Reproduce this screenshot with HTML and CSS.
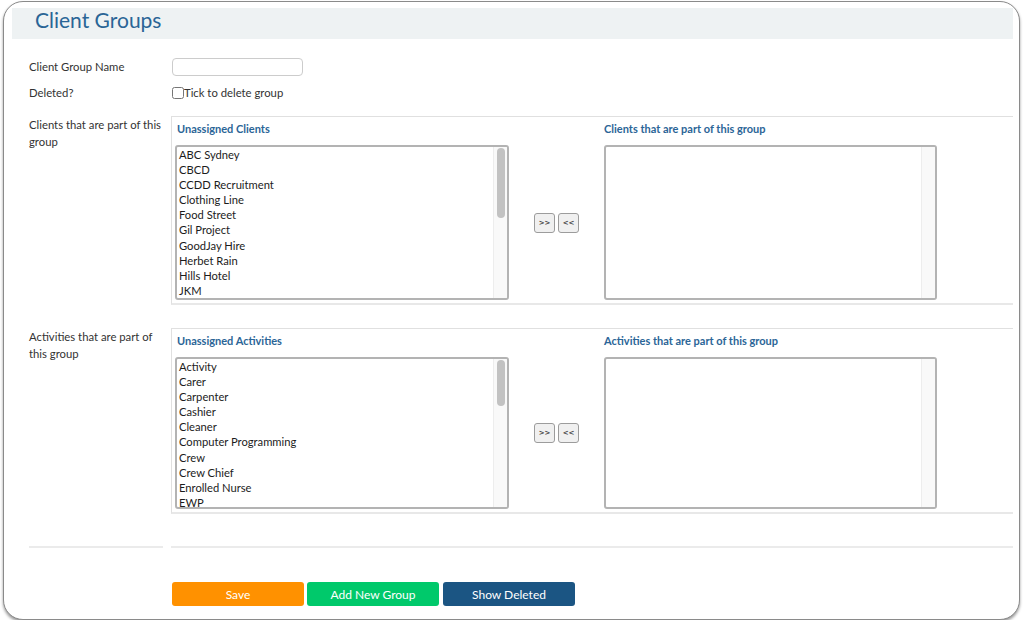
FILE: index.html
```html
<!DOCTYPE html>
<html>
<head>
    <link rel="stylesheet" href="styles.css">
</head>
<body>
    <div class="window">
        <div class="page-header">
            <h1>Client Groups</h1>
        </div>
        <div class="group-form">
            <div class="form-row row-name">
                <label class="form-label" for="groupName">Client Group Name</label>
                <div class="form-field">
                    <input type="text" id="groupName" class="text-input">
                </div>
            </div>
            <div class="form-row row-deleted">
                <div class="form-label">Deleted?</div>
                <div class="form-field">
                    <label class="check"><input type="checkbox">Tick to delete group</label>
                </div>
            </div>
            <div class="form-row row-picker">
                <div class="form-label label-wrap">Clients that are part of this group</div>
                <div class="picker">
                    <div class="picker-title">Unassigned Clients</div>
                    <div></div>
                    <div class="picker-title title-right">Clients that are part of this group</div>
                    <div class="listbox">
                        <div class="list-items">
                            <div>ABC Sydney</div>
                            <div>CBCD</div>
                            <div>CCDD Recruitment</div>
                            <div>Clothing Line</div>
                            <div>Food Street</div>
                            <div>Gil Project</div>
                            <div>GoodJay Hire</div>
                            <div>Herbet Rain</div>
                            <div>Hills Hotel</div>
                            <div>JKM</div>
                        </div>
                        <div class="scroll-track"><div class="scroll-thumb thumb-clients"></div></div>
                    </div>
                    <div class="mover">
                        <button class="move-btn">&gt;&gt;</button>
                        <button class="move-btn">&lt;&lt;</button>
                    </div>
                    <div class="listbox">
                        <div class="list-items"></div>
                        <div class="scroll-track"></div>
                    </div>
                </div>
            </div>
            <div class="form-row row-picker">
                <div class="form-label label-wrap">Activities that are part of this group</div>
                <div class="picker">
                    <div class="picker-title">Unassigned Activities</div>
                    <div></div>
                    <div class="picker-title title-right">Activities that are part of this group</div>
                    <div class="listbox listbox-short">
                        <div class="list-items">
                            <div>Activity</div>
                            <div>Carer</div>
                            <div>Carpenter</div>
                            <div>Cashier</div>
                            <div>Cleaner</div>
                            <div>Computer Programming</div>
                            <div>Crew</div>
                            <div>Crew Chief</div>
                            <div>Enrolled Nurse</div>
                            <div>EWP</div>
                        </div>
                        <div class="scroll-track"><div class="scroll-thumb thumb-activities"></div></div>
                    </div>
                    <div class="mover">
                        <button class="move-btn">&gt;&gt;</button>
                        <button class="move-btn">&lt;&lt;</button>
                    </div>
                    <div class="listbox listbox-short">
                        <div class="list-items"></div>
                        <div class="scroll-track"></div>
                    </div>
                </div>
            </div>
            <div class="form-row row-divider">
                <div class="divider-cell"></div>
                <div class="divider-cell"></div>
            </div>
            <div class="form-row row-actions">
                <div></div>
                <div class="actions">
                    <button class="btn btn-save">Save</button>
                    <button class="btn btn-add">Add New Group</button>
                    <button class="btn btn-deleted">Show Deleted</button>
                </div>
            </div>
        </div>
    </div>
</body>
</html>
```

FILE: styles.css
```css
body {
    margin: 0;
    background: #fff;
    font-family: Lato, "Open Sans", sans-serif;
}
.window {
    margin: 1px 4px 0 3px;
    height: 611px;
    padding: 6px 6px 0 8px;
    border: 1px solid #8a8a8a;
    border-radius: 20px;
    box-shadow: 0 2px 3px rgba(0, 0, 0, 0.4);
    background: #fff;
}
.page-header {
    background-color: #eef2f3;
    padding: 0 0 8px 23px;
}
.page-header h1 {
    margin: 0;
    font-size: 21px;
    line-height: 23px;
    font-weight: normal;
    color: #2a6596;
}
.group-form {
    padding: 19px 0 0 17px;
}
.form-row {
    display: grid;
    grid-template-columns: 134px 1fr;
    column-gap: 8px;
}
.form-label {
    font-size: 11.3px;
    line-height: 18px;
    color: #333;
}
.label-wrap {
    line-height: 17px;
}
.row-name {
    margin-bottom: 8px;
}
.row-deleted {
    margin-bottom: 14px;
}
.text-input {
    display: block;
    margin: 0 0 0 1px;
    width: 131px;
    height: 18px;
    border: 1px solid #ccc;
    border-radius: 4px;
    box-sizing: border-box;
    padding: 0 4px;
}
.check {
    display: flex;
    align-items: center;
    font-size: 11.3px;
    line-height: 18px;
    color: #333;
}
.check input {
    margin: 0 0 0 1px;
    width: 12px;
    height: 12px;
}
.picker {
    display: grid;
    grid-template-columns: 334px 95px 333px;
    border-top: 1px solid #e0e0e0;
    border-left: 1px solid #e0e0e0;
    border-bottom: 2px solid #e8e8e8;
    padding: 4px 0 3px 3px;
}
.row-picker + .row-picker {
    margin-top: 23px;
}
.picker-title {
    font-size: 11px;
    line-height: 15px;
    font-weight: bold;
    color: #2b6597;
    margin: 0 0 9px 2px;
}
.title-right {
    margin-left: 0;
}
.listbox {
    display: flex;
    height: 155px;
    border: 2px solid #b3b3b3;
    border-radius: 3px;
    box-sizing: border-box;
    background: #fff;
    overflow: hidden;
}
.listbox-short {
    height: 152px;
}
.list-items {
    flex: 1;
    padding: 0 0 0 2px;
    font-size: 11.2px;
    line-height: 15.1px;
    color: #1c1c1c;
    overflow: hidden;
}
.scroll-track {
    width: 13px;
    background: #f9f9f9;
    border-left: 1px solid #ededed;
}
.scroll-thumb {
    margin: 1px 2px 0 3px;
    border-radius: 4px;
    background: #c2c2c2;
}
.thumb-clients {
    height: 70px;
}
.thumb-activities {
    height: 46px;
}
.mover {
    display: flex;
    align-items: center;
    justify-content: center;
    gap: 3px;
}
.move-btn {
    width: 21px;
    height: 20px;
    padding: 0;
    font-family: "DejaVu Sans", sans-serif;
    font-size: 7px;
    font-weight: bold;
    color: #444;
    background: #f0f0f0;
    border: 1px solid #9c9c9c;
    border-radius: 3px;
}
.row-divider {
    height: 34px;
}
.divider-cell {
    border-bottom: 2px solid #ebebeb;
}
.row-actions {
    margin-top: 34px;
}
.actions {
    display: flex;
    gap: 3px;
    padding-left: 1px;
}
.btn {
    width: 132px;
    height: 24px;
    border: none;
    border-radius: 3px;
    color: #fff;
    font-family: Lato, sans-serif;
    font-size: 12px;
    cursor: pointer;
}
.btn-save {
    background-color: #ff9100;
}
.btn-add {
    background-color: #00c96b;
}
.btn-deleted {
    background-color: #1b5583;
    margin-left: 1px;
}
```
